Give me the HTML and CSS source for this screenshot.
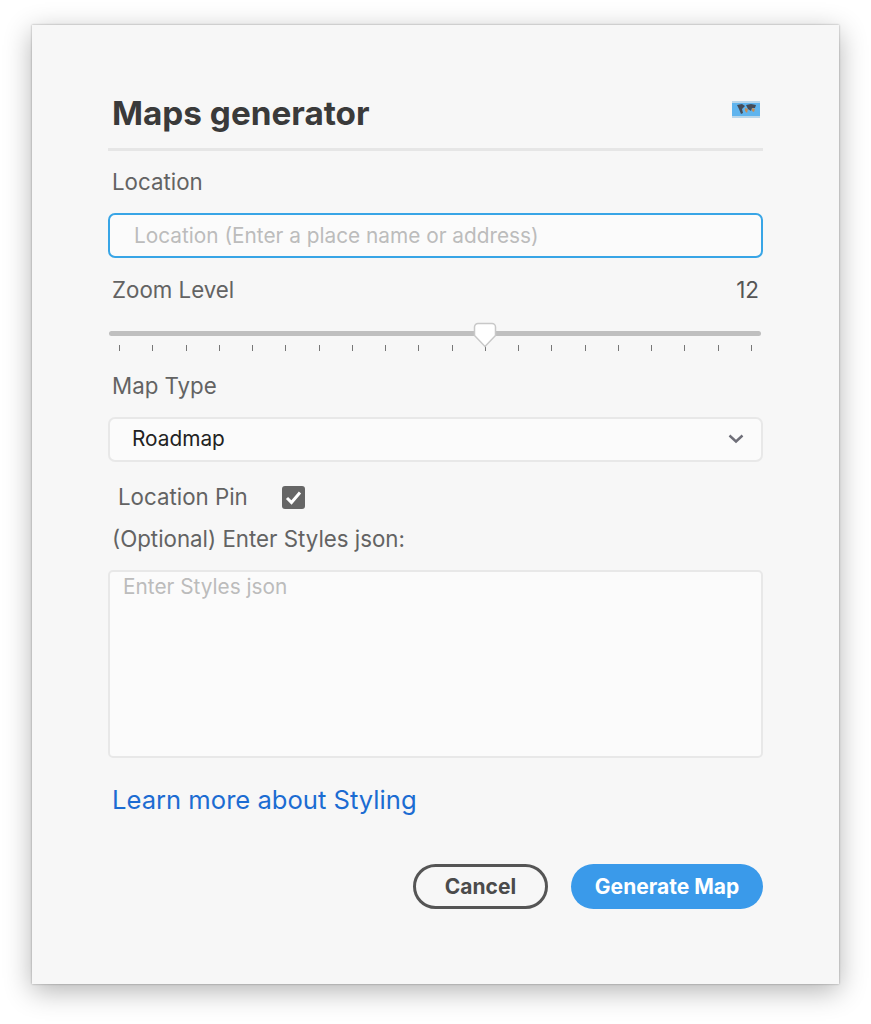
FILE: index.html
```html
<!DOCTYPE html>
<html lang="en">
<head>
    <meta charset="UTF-8">
    <meta name="viewport" content="width=device-width, initial-scale=1.0">
    <title>Maps generator</title>
    <link rel="stylesheet" href="styles.css">
</head>
<body>
    <div class="dialog">
        <div class="dialog-header">
            <h2>Maps generator</h2>
            <svg class="map-icon" width="28" height="19" viewBox="0 0 28 19">
                <rect x="0" y="1" width="28" height="17" fill="#5fb4ee"/>
                <path d="M0 1h28v2H0zM0 16h28v2H0z" fill="#b9d6ea"/>
                <path d="M5 5l5-1 3 2-3 3 1 4-2 1-2-5zM14 5l5-1 5 1-1 3-3 0-1 3-3-2z" fill="#454c58"/>
                <path d="M13 8l3 1-1 4-2-2zM20 8l3 1-1 3-2-1z" fill="#c58d55"/>
            </svg>
        </div>

        <label class="field-label label-location">Location</label>
        <input class="text-input" type="text" placeholder="Location (Enter a place name or address)">

        <div class="zoom-row">
            <span class="field-label">Zoom Level</span>
            <span class="zoom-value">12</span>
        </div>
        <div class="slider">
            <div class="slider-track"></div>
            <div class="slider-ticks">
                <i></i><i></i><i></i><i></i><i></i><i></i><i></i><i></i><i></i><i></i>
                <i></i><i></i><i></i><i></i><i></i><i></i><i></i><i></i><i></i><i></i>
            </div>
            <svg class="slider-thumb" width="24" height="26" viewBox="0 0 24 26">
                <path d="M5 1.500h14a3.500 3.500 0 0 1 3.500 3.500v8.500L12 24.500 1.500 13.500V5A3.500 3.500 0 0 1 5 1.500z" fill="#fff" stroke="#c8c8c8" stroke-width="1.500"/>
            </svg>
        </div>

        <label class="field-label label-type">Map Type</label>
        <div class="select-box">
            <span>Roadmap</span>
            <svg width="16" height="10" viewBox="0 0 16 10">
                <path d="M1.500 1.500l6.500 6 6.500-6" fill="none" stroke="#6e6e78" stroke-width="2.400"/>
            </svg>
        </div>

        <div class="pin-row">
            <span class="field-label">Location Pin</span>
            <span class="checkbox">
                <svg width="23" height="23" viewBox="0 0 23 23">
                    <path d="M5 12l4.500 4.500L18 6.500" fill="none" stroke="#fff" stroke-width="3"/>
                </svg>
            </span>
        </div>

        <label class="field-label label-styles">(Optional) Enter Styles json:</label>
        <textarea class="styles-input" placeholder="Enter Styles json"></textarea>

        <a class="learn-link" href="#">Learn more about Styling</a>

        <div class="dialog-actions">
            <button class="btn btn-cancel">Cancel</button>
            <button class="btn btn-primary">Generate Map</button>
        </div>
    </div>
</body>
</html>
```

FILE: styles.css
```css
body {
    font-family: Inter, 'Noto Sans', sans-serif;
    background: #fff;
    margin: 0;
    padding: 25px 32px 40px;
}

.dialog {
    box-sizing: border-box;
    width: 807px;
    height: 959px;
    padding: 64px 76px 0;
    background: #f7f7f7;
    box-shadow: 0 7px 26px rgba(0,0,0,0.3), 0 0 2px rgba(0,0,0,0.35);
}

.dialog-header {
    display: flex;
    justify-content: space-between;
    align-items: flex-start;
    height: 55px;
    padding: 4px 3px 0 4px;
    border-bottom: 3px solid #e6e6e6;
}

.dialog-header h2 {
    margin: 0;
    font-size: 33.300px;
    line-height: 40px;
    font-weight: 700;
    color: #3a3a3a;
}

.map-icon {
    margin-top: 7px;
}

.field-label {
    display: block;
    font-size: 22.300px;
    line-height: 28px;
    color: #636363;
    margin-left: 4px;
}

.label-location {
    margin-top: 17px;
}

.text-input {
    display: block;
    box-sizing: border-box;
    width: 100%;
    height: 45px;
    margin-top: 17px;
    padding: 0 24px;
    font: 20.800px Inter, sans-serif;
    background: #fbfbfb;
    border: 2px solid #38a5e6;
    border-radius: 7px;
    outline: none;
}

.text-input::placeholder,
.styles-input::placeholder {
    color: #bcbcbc;
    opacity: 1;
}

.zoom-row {
    display: flex;
    justify-content: space-between;
    margin-top: 18px;
}

.zoom-value {
    font-size: 22.500px;
    line-height: 28px;
    color: #555;
    margin-right: 4px;
}

.slider {
    position: relative;
    height: 46px;
    margin-top: 17px;
}

.slider-track {
    position: absolute;
    left: 1px;
    right: 2px;
    top: 10px;
    height: 5px;
    border-radius: 3px;
    background: #bfbfbf;
}

.slider-ticks {
    display: flex;
    justify-content: space-between;
    padding: 24px 11px 0;
}

.slider-ticks i {
    width: 1px;
    height: 6px;
    background: #777;
}

.slider-thumb {
    position: absolute;
    left: 365px;
    top: 1px;
}

.label-type {
    margin-top: 5px;
}

.select-box {
    display: flex;
    justify-content: space-between;
    align-items: center;
    box-sizing: border-box;
    height: 45px;
    margin-top: 17px;
    padding: 0 17px 2px 22px;
    font-size: 20.800px;
    color: #222;
    background: #fbfbfb;
    border: 2px solid #e8e8e8;
    border-radius: 7px;
}

.pin-row {
    display: flex;
    align-items: center;
    gap: 34px;
    margin: 21px 0 0 10px;
}

.pin-row .field-label {
    margin-left: 0;
}

.checkbox {
    width: 23px;
    height: 23px;
    border-radius: 3px;
    background: #666;
}

.checkbox svg {
    display: block;
}

.label-styles {
    margin-top: 14px;
}

.styles-input {
    display: block;
    box-sizing: border-box;
    width: 100%;
    height: 188px;
    margin-top: 17px;
    padding: 2px 13px;
    font: 20.800px Inter, sans-serif;
    background: #fbfbfb;
    border: 2px solid #e8e8e8;
    border-radius: 5px;
    resize: none;
}

.learn-link {
    display: block;
    margin: 26px 0 0 4px;
    font-size: 25.600px;
    line-height: 32px;
    color: #1c6cd2;
    text-decoration: none;
}

.dialog-actions {
    display: flex;
    justify-content: flex-end;
    gap: 23px;
    margin-top: 48px;
}

.btn {
    height: 45px;
    padding: 0 0 1px;
    font: 700 21px Inter, sans-serif;
    border-radius: 23px;
    cursor: pointer;
}

.btn-cancel {
    width: 135px;
    color: #4b4b4b;
    background: transparent;
    border: 3px solid #555;
}

.btn-primary {
    width: 192px;
    color: #fff;
    background: #3a9aea;
    border: none;
}
```
